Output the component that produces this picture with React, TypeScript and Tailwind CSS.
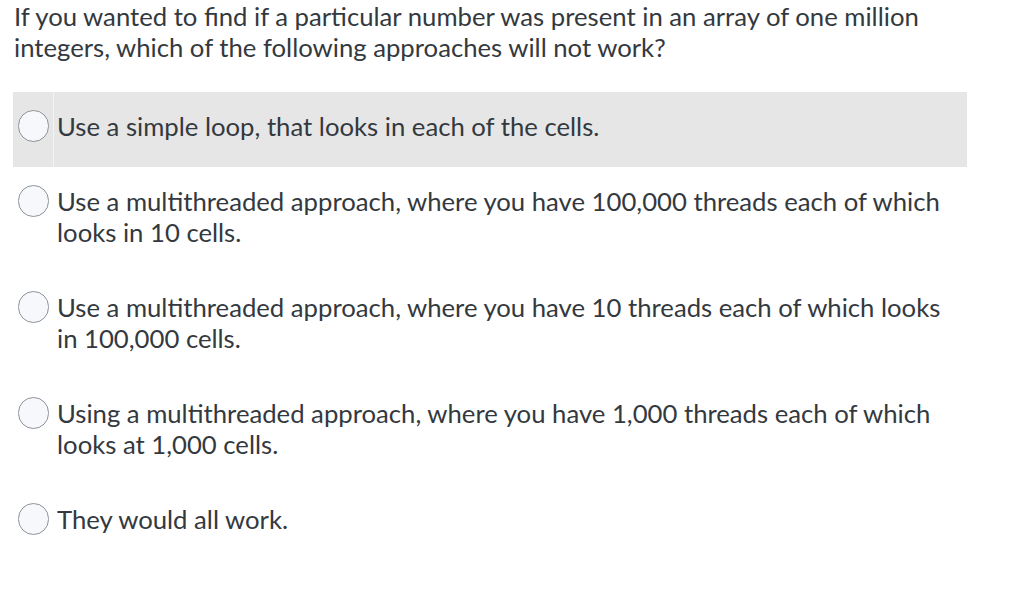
const question = [
  "If you wanted to find if a particular number was present in an array of one million",
  "integers, which of the following approaches will not work?",
];

const options = [
  ["Use a simple loop, that looks in each of the cells."],
  ["Use a multithreaded approach, where you have 100,000 threads each of which", "looks in 10 cells."],
  ["Use a multithreaded approach, where you have 10 threads each of which looks", "in 100,000 cells."],
  ["Using a multithreaded approach, where you have 1,000 threads each of which", "looks at 1,000 cells."],
  ["They would all work."],
];

export default function App() {
  return (
    <div className="w-[1024px] h-[596px] bg-white font-['Lato',sans-serif] text-[#33393e] text-[25.7px] leading-[31px] overflow-hidden">
      <div className="pl-[14px] pt-[1px]">
        {question.map((line, i) => (
          <div key={i} className="whitespace-nowrap">{line}</div>
        ))}
      </div>

      <div className="mt-[29px] ml-[13px] w-[954px]">
        {options.map((opt, index) => (
          <div key={index} className={index === 0 ? "flex bg-[#e6e6e6]" : "flex"}>
            <div className="w-[41px] flex justify-center pt-[18px] border-r border-white/50">
              <span className="block w-[31px] h-[32px] rounded-full border border-[#8c9398] bg-[#f6f8fc]" />
            </div>
            <div className="pl-[3px] pt-[19px] pb-[25px]">
              {opt.map((line, i) => (
                <div key={i} className="whitespace-nowrap">{line}</div>
              ))}
            </div>
          </div>
        ))}
      </div>
    </div>
  );
}
